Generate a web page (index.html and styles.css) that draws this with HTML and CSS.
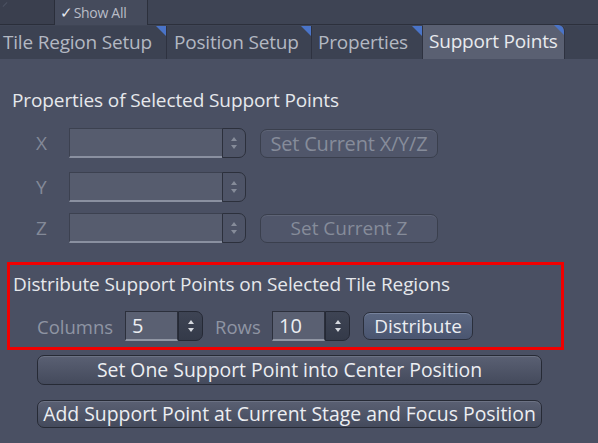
FILE: index.html
```html
<!DOCTYPE html>
<html>
<head>
<meta charset="utf-8">
<link rel="stylesheet" href="styles.css">
</head>
<body>
<div class="app">
  <div class="topbar">
    <div class="tb-left"><span class="tick-mark"></span></div>
    <div class="tb-show"><span class="check">✓</span>Show All</div>
    <div class="tb-rest"></div>
  </div>
  <div class="tabs">
    <div class="tab t1">Tile Region Setup</div>
    <div class="tab t2">Position Setup</div>
    <div class="tab t3">Properties</div>
    <div class="tab t4 active">Support Points</div>
    <div class="tab-fill"></div>
  </div>
  <div class="panel">
    <div class="heading h1">Properties of Selected Support Points</div>
    <div class="row r-x">
      <span class="lbl dim">X</span>
      <div class="spin wide"><div class="field"></div><div class="arrows"><i class="up"></i><i class="down"></i></div></div>
      <div class="btn disabled b-set b-xyz">Set Current X/Y/Z</div>
    </div>
    <div class="row r-y">
      <span class="lbl dim">Y</span>
      <div class="spin wide"><div class="field"></div><div class="arrows"><i class="up"></i><i class="down"></i></div></div>
    </div>
    <div class="row r-z">
      <span class="lbl dim">Z</span>
      <div class="spin wide"><div class="field"></div><div class="arrows"><i class="up"></i><i class="down"></i></div></div>
      <div class="btn disabled b-set">Set Current Z</div>
    </div>
    <div class="redbox">
      <div class="heading h2">Distribute Support Points on Selected Tile Regions</div>
      <div class="row r-d">
        <span class="lbl2">Columns</span>
        <div class="spin small active-spin"><div class="field">5</div><div class="arrows"><i class="up"></i><i class="down"></i></div></div>
        <span class="lbl2 rows">Rows</span>
        <div class="spin small active-spin"><div class="field">10</div><div class="arrows"><i class="up"></i><i class="down"></i></div></div>
        <div class="btn blue b-dist">Distribute</div>
      </div>
    </div>
    <div class="btn big b1">Set One Support Point into Center Position</div>
    <div class="btn big b2">Add Support Point at Current Stage and Focus Position</div>
  </div>
</div>
</body>
</html>
```
FILE: styles.css
```css
html, body {
  margin: 0;
  padding: 0;
  background: #4a5063;
}
.app {
  width: 598px;
  height: 443px;
  overflow: hidden;
  font-family: "Open Sans", "Noto Sans", sans-serif;
  background: #4a5063;
  display: flex;
  flex-direction: column;
}
.topbar {
  height: 25px;
  display: flex;
  background: #3d4353;
}
.tb-left {
  width: 55px;
  background: #3a3f4e;
  border-right: 1px solid #2a2e3a;
  border-bottom: 1px solid #2a2e3a;
  box-sizing: border-box;
  position: relative;
}
.tick-mark {
  position: absolute;
  left: 2px;
  top: 4px;
  width: 6px;
  height: 1px;
  background: #4c5262;
  transform: rotate(-45deg);
}
.tb-show {
  width: 92px;
  background: #454b5c;
  color: #b9bdc7;
  font-size: 14px;
  line-height: 25px;
  padding-left: 5px;
  box-sizing: border-box;
  white-space: nowrap;
  letter-spacing: -0.3px;
}
.check {
  color: #e6e8ee;
  font-size: 15px;
  margin-right: 1px;
}
.tb-rest {
  flex: 1;
  background: #3e4454;
  border-bottom: 1px solid #2c303c;
  border-left: 1px solid #2c303c;
  box-sizing: border-box;
}
.tabs {
  height: 34px;
  display: flex;
  align-items: flex-end;
  background: #3f4555;
}
.tab {
  position: relative;
  height: 33px;
  box-sizing: border-box;
  color: #b3b8c2;
  font-size: 19px;
  line-height: 32px;
  padding-left: 3px;
  background: #3c4252;
  border-right: 1px solid #2e3240;
  white-space: nowrap;
  overflow: hidden;
  letter-spacing: -0.2px;
}
.tab::after {
  content: "";
  position: absolute;
  right: 0;
  top: 0;
  border-style: solid;
  border-width: 0 10px 10px 0;
  border-color: transparent #4a74c8 transparent transparent;
}
.t1 { width: 167px; }
.t2 { width: 145px; padding-left: 7px; }
.t3 { width: 111px; padding-left: 6px; }
.t4 {
  width: 142px;
  padding-left: 6px;
  background: #5a6072;
  color: #e8eaee;
  border-radius: 0 6px 0 0;
  height: 34px;
  line-height: 33px;
}
.t4::after { border-radius: 0 6px 0 0; }
.tab-fill { flex: 1; height: 33px; background: #3c4252; }
.panel {
  flex: 1;
}
.heading {
  color: #e6e8ec;
  font-size: 19px;
  letter-spacing: -0.1px;
  white-space: nowrap;
}
.h1 {
  margin: 26px 0 0 12px;
  height: 30px;
  line-height: 30px;
}
.row {
  display: flex;
  align-items: center;
}
.r-x { margin-top: 13px; }
.r-y { margin-top: 14px; }
.r-z { margin-top: 11px; }
.lbl {
  width: 69px;
  padding-left: 36px;
  box-sizing: border-box;
  font-size: 19px;
}
.dim { color: #838998; }
.spin {
  display: flex;
  height: 30px;
  box-sizing: border-box;
}
.field {
  background: #565c6e;
  border: 1px solid #3c4150;
  border-bottom: 2px solid #8a90a0;
  border-right: none;
  box-sizing: border-box;
  color: #eceef2;
  font-size: 20px;
  line-height: 28px;
  padding-left: 6px;
}
.wide .field { width: 153px; }
.arrows {
  width: 24px;
  background: #4e5467;
  border: 1px solid #2c303c;
  border-radius: 0 7px 7px 0;
  box-sizing: border-box;
  display: flex;
  flex-direction: column;
  align-items: center;
  justify-content: center;
  gap: 4px;
}
.arrows i {
  display: block;
  width: 0;
  height: 0;
  border-left: 3px solid transparent;
  border-right: 3px solid transparent;
}
.arrows .up { border-bottom: 4px solid #868c9a; }
.arrows .down { border-top: 4px solid #868c9a; }
.btn {
  box-sizing: border-box;
  border-radius: 7px;
  text-align: center;
  font-size: 19px;
  white-space: nowrap;
}
.disabled {
  background: #50566a;
  border: 1px solid #3a3f4d;
  color: #868c9a;
  box-shadow: inset 0 1px 0 #5e6476;
}
.b-set {
  width: 178px;
  height: 29px;
  line-height: 27px;
  margin-left: 14px;
}
.b-xyz { font-size: 20px; letter-spacing: -0.2px; }
.redbox {
  margin: 19px 0 0 7px;
  width: 557px;
  height: 88px;
  border: 3px solid #f00000;
  box-sizing: border-box;
}
.h2 {
  margin: 6px 0 0 3px;
  height: 26px;
  line-height: 26px;
}
.r-d { margin-top: 14px; }
.lbl2 {
  color: #8f95a3;
  font-size: 18.5px;
  padding-left: 27px;
  width: 115px;
  box-sizing: border-box;
  white-space: nowrap;
}
.lbl2.rows {
  width: 69px;
  padding-left: 12px;
}
.small .field {
  width: 53px;
  background: #5a6072;
  border: 1px solid #2c303c;
  border-bottom: 2px solid #9096a4;
}
.active-spin .arrows {
  width: 25px;
  background: linear-gradient(#3e4454, #343a49);
  border-color: #252935;
}
.active-spin .arrows .up { border-bottom-color: #d6d9df; }
.active-spin .arrows .down { border-top-color: #d6d9df; }
.blue {
  background: linear-gradient(#5b6781, #4a5570);
  border: 1px solid #2a2f3c;
  color: #eceef2;
  box-shadow: inset 0 1px 0 #76829c;
}
.b-dist {
  width: 110px;
  height: 28px;
  line-height: 26px;
  margin-left: 13px;
}
.big {
  width: 505px;
  margin-left: 37px;
  background: linear-gradient(#5a6073, #444a5c);
  border: 1px solid #262a35;
  color: #eceef2;
  box-shadow: inset 0 1px 0 #6c7284;
  font-size: 19.4px;
}
.b1 { margin-top: 5px; height: 30px; line-height: 28px; }
.b2 { margin-top: 15px; height: 28px; line-height: 26px; }
```
